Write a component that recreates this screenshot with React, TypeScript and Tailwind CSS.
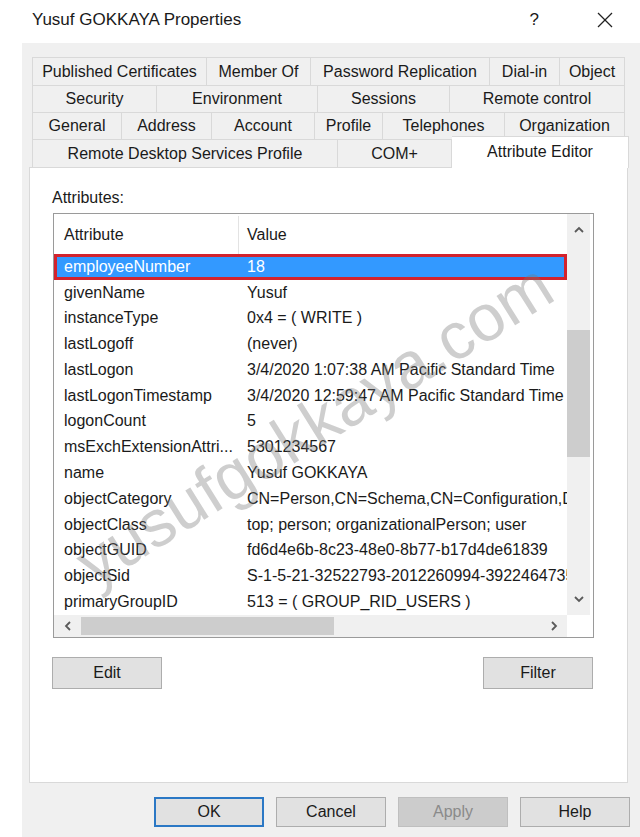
import React from 'react';

type Tab = { label: string; w: string };

const tabRows: Tab[][] = [
  [
    { label: 'Published Certificates', w: 'w-[175px]' },
    { label: 'Member Of', w: 'w-[104px]' },
    { label: 'Password Replication', w: 'w-[179px]' },
    { label: 'Dial-in', w: 'w-[70px]' },
    { label: 'Object', w: 'w-[65px]' },
  ],
  [
    { label: 'Security', w: 'w-[125px]' },
    { label: 'Environment', w: 'w-[161px]' },
    { label: 'Sessions', w: 'w-[132px]' },
    { label: 'Remote control', w: 'w-[175px]' },
  ],
  [
    { label: 'General', w: 'w-[90px]' },
    { label: 'Address', w: 'w-[90px]' },
    { label: 'Account', w: 'w-[103px]' },
    { label: 'Profile', w: 'w-[68px]' },
    { label: 'Telephones', w: 'w-[122px]' },
    { label: 'Organization', w: 'w-[120px]' },
  ],
];

const attributes: [string, string][] = [
  ['employeeNumber', '18'],
  ['givenName', 'Yusuf'],
  ['instanceType', '0x4 = ( WRITE )'],
  ['lastLogoff', '(never)'],
  ['lastLogon', '3/4/2020 1:07:38 AM Pacific Standard Time'],
  ['lastLogonTimestamp', '3/4/2020 12:59:47 AM Pacific Standard Time'],
  ['logonCount', '5'],
  ['msExchExtensionAttri...', '5301234567'],
  ['name', 'Yusuf GOKKAYA'],
  ['objectCategory', 'CN=Person,CN=Schema,CN=Configuration,DC=contoso,DC=com'],
  ['objectClass', 'top; person; organizationalPerson; user'],
  ['objectGUID', 'fd6d4e6b-8c23-48e0-8b77-b17d4de61839'],
  ['objectSid', 'S-1-5-21-32522793-2012260994-3922464735-1105'],
  ['primaryGroupID', '513 = ( GROUP_RID_USERS )'],
];

// small scroll arrow glyphs
function Chevron({ dir }: { dir: 'up' | 'down' | 'left' | 'right' }) {
  const pts = {
    up: '1,6 5,2 9,6',
    down: '1,2 5,6 9,2',
    left: '6,1 2,5 6,9',
    right: '2,1 6,5 2,9',
  }[dir];
  const horiz = dir === 'left' || dir === 'right';
  return (
    <svg
      width={horiz ? 8 : 10}
      height={horiz ? 10 : 8}
      viewBox={horiz ? '0 0 8 10' : '0 0 10 8'}
      fill="none"
      stroke="#5a5a5a"
      strokeWidth="1.8"
    >
      <polyline points={pts} />
    </svg>
  );
}

function Button({
  children,
  className = '',
}: {
  children: React.ReactNode;
  className?: string;
}) {
  return (
    <button
      className={`h-[30px] w-[110px] border border-[#adadad] bg-[#e1e1e1] text-[16px] text-[#1a1a1a] ${className}`}
    >
      {children}
    </button>
  );
}

export default function App() {
  return (
    <div className="relative flex h-[837px] w-[640px] flex-col overflow-hidden bg-white font-['Liberation_Sans',Arial,sans-serif] text-[16px] text-[#1a1a1a]">
      {/* title bar */}
      <div className="flex h-[43px] shrink-0 items-center pl-[32px] pr-[27px]">
        <span className="pb-[3px] text-[17px]">Yusuf GOKKAYA Properties</span>
        <span className="ml-auto pb-[3px] text-[17px]">?</span>
        <svg width="16" height="16" viewBox="0 0 16 16" className="ml-[58px] mb-[3px]" stroke="#222" strokeWidth="1.2">
          <line x1="1" y1="1" x2="15" y2="15" />
          <line x1="15" y1="1" x2="1" y2="15" />
        </svg>
      </div>

      {/* dialog body */}
      <div className="ml-[22px] flex flex-1 flex-col bg-[#f0f0f0] pt-[14px]">
        {/* tab strip */}
        <div className="ml-[10px] flex flex-col">
          {tabRows.map((row, i) => (
            <div key={i} className={`flex ${i === 0 ? 'h-[28px]' : 'h-[27px]'}`}>
              {row.map((t, j) => (
                <div
                  key={t.label}
                  className={`${t.w} flex items-center justify-center border-t border-r border-[#d9d9d9] whitespace-nowrap ${j === 0 ? 'border-l' : ''}`}
                >
                  {t.label}
                </div>
              ))}
            </div>
          ))}
          <div className="relative z-10 flex h-[28px] items-end">
            <div className="flex h-[28px] w-[306px] items-center justify-center border-t border-r border-l border-[#d9d9d9]">
              Remote Desktop Services Profile
            </div>
            <div className="flex h-[28px] w-[114px] items-center justify-center border-t border-r border-[#d9d9d9]">
              COM+
            </div>
            <div className="-mb-px flex h-[32px] w-[177px] items-start justify-center border-t border-r border-[#d9d9d9] bg-white pt-[3px]">
              Attribute Editor
            </div>
          </div>
        </div>

        {/* tab panel */}
        <div className="ml-[7px] flex h-[616px] w-[599px] flex-col border border-[#d9d9d9] bg-white pl-[22px] pt-[20px]">
          <div className="h-[25px] leading-[20px]">Attributes:</div>

          {/* list box */}
          <div className="ml-[1px] grid h-[425px] w-[541px] grid-cols-[513px_26px] grid-rows-[1fr_22px] border border-[#9a9a9a]">
            <div className="overflow-hidden">
              <div className="flex h-[40px] items-center pt-[2px]">
                <div className="w-[184px] pl-[10px]">Attribute</div>
                <div className="h-full w-px bg-[#e3e3e3]" />
                <div className="pl-[8px]">Value</div>
              </div>
              {attributes.map(([k, v], i) => (
                <div
                  key={k}
                  className={`flex h-[25.77px] items-center whitespace-nowrap ${
                    i === 0 ? 'bg-[#3399ff] text-white shadow-[inset_0_0_0_3px_#d3232d]' : ''
                  }`}
                >
                  <div className="w-[184px] shrink-0 pl-[10px]">{k}</div>
                  <div className="shrink-0 pl-[9px]">{v}</div>
                </div>
              ))}
            </div>

            {/* vertical scrollbar */}
            <div className="flex">
              <div className="flex w-[23px] flex-col bg-[#f0f0f0]">
                <div className="flex h-[32px] items-center justify-center">
                  <Chevron dir="up" />
                </div>
                <div className="flex-1">
                  <div className="mt-[84px] h-[127px] bg-[#cdcdcd]" />
                </div>
                <div className="flex h-[32px] items-center justify-center">
                  <Chevron dir="down" />
                </div>
              </div>
            </div>

            {/* horizontal scrollbar */}
            <div className="flex items-center bg-[#f0f0f0]">
              <div className="flex w-[27px] items-center justify-center">
                <Chevron dir="left" />
              </div>
              <div className="h-[18px] w-[253px] bg-[#cdcdcd]" />
              <div className="ml-auto flex w-[26px] items-center justify-center">
                <Chevron dir="right" />
              </div>
            </div>
            <div className="bg-white" />
          </div>

          <div className="mt-[19px] flex w-[541px] justify-between">
            <button className="h-[32px] w-[110px] border border-[#adadad] bg-[#e1e1e1]">Edit</button>
            <button className="h-[32px] w-[110px] border border-[#adadad] bg-[#e1e1e1]">Filter</button>
          </div>
        </div>

        {/* dialog buttons */}
        <div className="mt-[14px] flex justify-end gap-[12px] pr-[10px]">
          <Button className="!border-2 !border-[#2b78c5]">OK</Button>
          <Button>Cancel</Button>
          <Button className="!border-[#bfbfbf] !bg-[#cccccc] !text-[#8a8a8a]">Apply</Button>
          <Button>Help</Button>
        </div>
      </div>

      {/* watermark */}
      <div className="pointer-events-none absolute left-[314px] top-[424px] -translate-x-1/2 -translate-y-1/2 -rotate-[32deg] whitespace-nowrap text-[66px] leading-none text-[rgba(120,120,120,0.36)]">
        yusufgokkaya.com
      </div>
    </div>
  );
}
